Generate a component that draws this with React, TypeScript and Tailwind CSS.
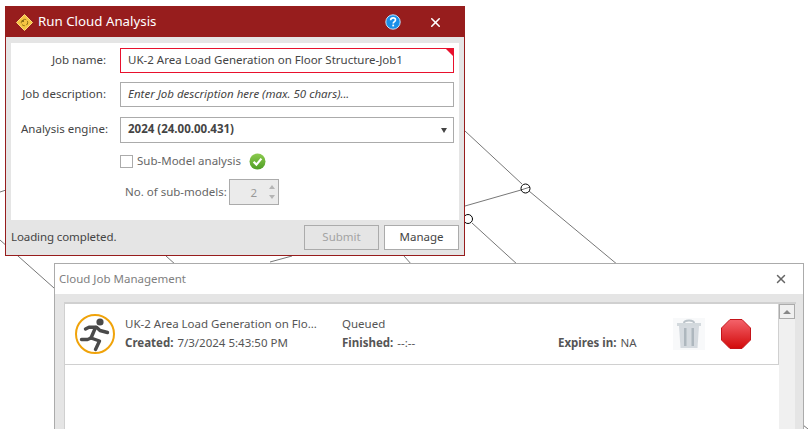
import { X } from "lucide-react";

const font = { fontFamily: '"Noto Sans", sans-serif' };

const Backdrop = () => (
  <svg className="absolute inset-0" width="811" height="429" fill="none" stroke="#777" strokeWidth="1">
    <path d="M0 192L6 190" />
    <path d="M0 240L54 288" />
    <path d="M166 256L176 265" />
    <path d="M270 262L292 256" />
    <path d="M404 256L412 265" />
    <path d="M465 131L522 184" />
    <path d="M529 191L618 265" />
    <path d="M465 206L521 190L530 187" />
    <path d="M472 223L518 265" />
    <path d="M803 425L808 429" />
    <circle cx="525.5" cy="188.5" r="4.5" stroke="#000" />
    <circle cx="468" cy="219" r="4.5" stroke="#000" />
  </svg>
);

const Logo = () => (
  <svg width="17" height="17" viewBox="0 0 17 17">
    <path d="M8.5 0.5L16.5 8.5L8.5 16.5L0.5 8.5Z" fill="#f6c343" stroke="#f9d97c" />
    <circle cx="8.5" cy="8.5" r="3.2" fill="none" stroke="#8a6a10" strokeWidth="1" strokeDasharray="3 1.5" />
    <circle cx="7" cy="7" r="1" fill="#6b5208" />
  </svg>
);

const HelpIcon = () => (
  <svg width="16" height="16" viewBox="0 0 16 16">
    <circle cx="8" cy="8" r="7.2" fill="#1b8fe8" stroke="#bfe2fb" strokeWidth="1" />
    <path d="M5.6 6.2C5.7 4.6 6.8 3.9 8.1 3.9C9.5 3.9 10.5 4.7 10.5 5.9C10.5 7.5 8.2 7.6 8.2 9.4" fill="none" stroke="#fff" strokeWidth="1.6" />
    <rect x="7.3" y="10.6" width="1.8" height="1.8" fill="#fff" />
  </svg>
);

const CheckIcon = () => (
  <svg width="17" height="17" viewBox="0 0 17 17">
    <defs>
      <linearGradient id="okFill" x1="0" y1="0" x2="0" y2="1">
        <stop offset="0" stopColor="#8ccb4e" />
        <stop offset="1" stopColor="#4f9e26" />
      </linearGradient>
    </defs>
    <circle cx="8.5" cy="8.5" r="8" fill="url(#okFill)" />
    <path d="M4.6 8.8L7.4 11.6L12.4 5.6" fill="none" stroke="#fff" strokeWidth="2.2" />
  </svg>
);

const RunnerIcon = () => (
  <svg width="40" height="40" viewBox="0 0 40 40">
    <circle cx="20" cy="20" r="19" fill="none" stroke="#f0a30a" strokeWidth="2" />
    <circle cx="25" cy="8" r="3.6" fill="#4a4a4a" />
    <g fill="none" stroke="#4a4a4a" strokeWidth="3.4" strokeLinejoin="round" strokeLinecap="round">
      <path d="M10.5 15L14 13.2H21.5L25 16.5L32.5 18.5" />
      <path d="M20.5 13.5L16 24" />
      <path d="M16 24L12.5 25.5H6.5" />
      <path d="M16 24L24.5 27L20.5 35.5" />
    </g>
  </svg>
);

const TrashIcon = () => (
  <div className="w-8 h-8 bg-[#f8f9fa] flex items-center justify-center">
    <svg width="26" height="32" viewBox="0 0 26 32">
      <path d="M8 5C8 1.5 18 1.5 18 5" fill="none" stroke="#bcc4ca" strokeWidth="2" />
      <rect x="1" y="5" width="24" height="3" fill="#d3d9dd" />
      <path d="M3 8H23L21.5 30H4.5Z" fill="#d5dadf" />
      <rect x="8" y="10" width="2.5" height="18" fill="#aeb7be" />
      <rect x="15.5" y="10" width="2.5" height="18" fill="#aeb7be" />
    </svg>
  </div>
);

const StopIcon = () => (
  <svg width="30" height="30" viewBox="0 0 30 30">
    <defs>
      <linearGradient id="stopFill" x1="0" y1="0" x2="0" y2="1">
        <stop offset="0" stopColor="#f4636b" />
        <stop offset="1" stopColor="#d20a0a" />
      </linearGradient>
    </defs>
    <path d="M9 0.5H21L29.5 9V21L21 29.5H9L0.5 21V9Z" fill="url(#stopFill)" stroke="#c4141a" />
  </svg>
);

const inputCls = "w-[334px] h-[25px] border border-[#ababab] px-[7px] pb-[2px] flex items-center text-[11.5px] text-[#444]";
const labelCls = "w-[85px] pb-[2px] text-right whitespace-nowrap";

const RunDialog = () => (
  <div className="absolute left-[5px] top-[6px] w-[460px] h-[250px] bg-[#e5e5e5] border border-[#971d1d] flex flex-col">
    <div className="h-[30px] shrink-0 bg-[#971d1d] flex items-center pl-[10px] text-white">
      <Logo />
      <span className="ml-[5px] text-[13.3px]">Run Cloud Analysis</span>
      <div className="ml-auto mr-[27px]">
        <HelpIcon />
      </div>
      <X size={15} strokeWidth={2.5} className="mr-[21px]" />
    </div>
    <div className="mx-[5px] mt-[6px] h-[177px] bg-white pt-[5px] pl-[10px] text-[11.5px] text-[#444]">
      <div className="flex items-center">
        <span className={labelCls}>Job name:</span>
        <div className={`${inputCls} relative ml-[14px] border-[#e8112d]`}>
          <span>UK-2 Area Load Generation on Floor Structure-Job1</span>
          <div className="absolute right-0 top-0 w-0 h-0 border-t-[7px] border-l-[7px] border-t-[#e8112d] border-l-transparent" />
        </div>
      </div>
      <div className="flex items-center mt-[9px]">
        <span className={labelCls}>Job description:</span>
        <div className={`${inputCls} ml-[14px] italic`}>Enter Job description here (max. 50 chars)...</div>
      </div>
      <div className="flex items-center mt-[10px]">
        <span className={labelCls}>Analysis engine:</span>
        <div className={`${inputCls} ml-[14px] font-bold h-[26px] justify-between`}>
          <span>2024 (24.00.00.431)</span>
          <div className="w-0 h-0 mt-[2px] -mr-[1px] border-x-[3px] border-t-[5px] border-x-transparent border-t-[#444]" />
        </div>
      </div>
      <div className="flex items-center mt-[9px] ml-[99px] text-[#666]">
        <div className="w-[13px] h-[13px] border border-[#ababab]" />
        <span className="ml-[4px] pb-[1px]">Sub-Model analysis</span>
        <div className="ml-[8px]">
          <CheckIcon />
        </div>
      </div>
      <div className="flex items-center mt-[9px] ml-[104px] text-[#666]">
        <span className="w-[101px] pb-[1px] whitespace-nowrap">No. of sub-models:</span>
        <div className="ml-[3px] w-[50px] h-[26px] border border-[#ababab] bg-[#ebebeb] flex items-center justify-end">
          <span className="text-[#999] mr-[8px]">2</span>
          <div className="w-[13px] flex flex-col items-center gap-[6px]">
            <div className="w-0 h-0 border-x-[3px] border-b-[4px] border-x-transparent border-b-[#b5b5b5]" />
            <div className="w-0 h-0 border-x-[3px] border-t-[4px] border-x-transparent border-t-[#b5b5b5]" />
          </div>
        </div>
      </div>
    </div>
    <div className="flex-1 flex items-center pl-[5px] pr-[5px] text-[11.5px] text-[#444]">
      <span className="tracking-[-0.1px] pb-[2px]">Loading completed.</span>
      <div className="ml-auto w-[75px] h-[25px] pb-[2px] border border-[#ababab] flex items-center justify-center text-[#a3a3a3]">Submit</div>
      <div className="ml-[5px] w-[75px] h-[25px] pb-[2px] border border-[#ababab] bg-white flex items-center justify-center">Manage</div>
    </div>
  </div>
);

const JobWindow = () => (
  <div className="absolute left-[54px] top-[263px] w-[750px] h-[166px] bg-[#e5e5e5] border-x border-t border-[#ababab] flex flex-col overflow-hidden">
    <div className="h-[30px] shrink-0 bg-white flex items-center pl-[4px] text-[11.5px] text-[#808080]">
      <span>Cloud Job Management</span>
      <X size={14} strokeWidth={2.5} className="ml-auto mr-[15px] text-[#666]" />
    </div>
    <div className="flex-1 flex mt-[8px] ml-[9px] mr-[7px] border-t-2 border-l border-[#d0d0d0]">
      <div className="w-[714px] bg-white text-[11.5px] text-[#555]">
        <div className="h-[61px] border-b border-r border-[#d0d0d0] flex items-center pl-[10px]">
          <RunnerIcon />
          <div className="ml-[10px] w-[217px] pb-[2px]">
            <div>UK-2 Area Load Generation on Flo...</div>
            <div className="mt-[2px]">
              <span className="font-bold">Created:</span> <span className="ml-[1px]">7/3/2024 5:43:50 PM</span>
            </div>
          </div>
          <div className="w-[216px] pb-[2px]">
            <div>Queued</div>
            <div className="mt-[2px]">
              <span className="font-bold">Finished:</span> <span className="ml-[1px]">--:--</span>
            </div>
          </div>
          <div className="w-[115px] pt-[17px]">
            <span className="font-bold">Expires in:</span> <span className="ml-[1px]">NA</span>
          </div>
          <TrashIcon />
          <div className="ml-[16px]">
            <StopIcon />
          </div>
        </div>
      </div>
      <div className="w-[16px] bg-[#f0f0f0]">
        <div className="h-[15px] border border-[#ababab] flex items-center justify-center">
          <div className="w-0 h-0 border-x-[4px] border-b-[4px] border-x-transparent border-b-[#888]" />
        </div>
      </div>
    </div>
  </div>
);

export default function App() {
  return (
    <div className="relative w-[811px] h-[429px] bg-white overflow-hidden" style={font}>
      <Backdrop />
      <RunDialog />
      <JobWindow />
    </div>
  );
}
